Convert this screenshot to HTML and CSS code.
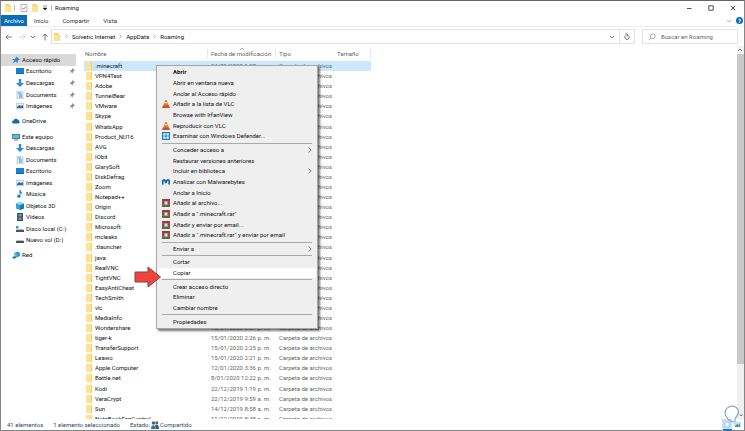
FILE: index.html
```
<!DOCTYPE html>
<html lang="es">
<head>
<meta charset="utf-8">
<title>Roaming</title>
<link rel="stylesheet" href="styles.css">
</head>
<body>
<svg class="defs" aria-hidden="true">
  <symbol id="folder" viewBox="0 0 8 9"><path d="M1 0h4l1 1h1v8H1z" fill="#f5cf68"/><path d="M1 2h5v7H1z" fill="#ffe294"/></symbol>
  <symbol id="down" viewBox="0 0 8 8"><path d="M2.8 0h2.4v4H8L4 8 0 4h2.8z" fill="#2b8be0"/></symbol>
  <symbol id="doc" viewBox="0 0 8 8"><path d="M1 0h5l1 1v7H1z" fill="#e4eef6" stroke="#9db4c6" stroke-width=".6"/><path d="M2 2h3M3 4h3M3 6h3" stroke="#2f8fd4"/></symbol>
  <symbol id="desk" viewBox="0 0 8 8"><path d="M0 1h8v6H0z" fill="#1583d3"/><path d="M0 6h8v1H0z" fill="#0f65ab"/></symbol>
  <symbol id="img" viewBox="0 0 8 8"><path d="M.3 1.3h7.4v5.4H.3z" fill="#e6f1fa" stroke="#98a9b8" stroke-width=".6"/><path d="M1 5l2-2 2 1 2-1v3H1z" fill="#336a9e"/></symbol>
  <symbol id="music" viewBox="0 0 8 8"><path d="M3.500 0h1c0 2 2.500 2 1.500 4.500C6 3.500 5 3 4.500 3v3.500A1.700 1.500 0 1 1 3.500 5z" fill="#1583d3"/></symbol>
  <symbol id="cube" viewBox="0 0 8 8"><path d="M4 0l4 1.500v5L4 8 0 6.500v-5z" fill="#2fa5de"/><path d="M4 3l4-1.500v5L4 8z" fill="#137bb9"/><path d="M4 0l4 1.500L4 3 0 1.500z" fill="#8fdcf7"/></symbol>
  <symbol id="video" viewBox="0 0 8 8"><path d="M1 0h6v8H1z" fill="#35414c"/><path d="M2.500 1h3v2.500h-3zM2.500 4.500h3V7h-3z" fill="#6f9cbd"/><path d="M1.700 0v8M6.300 0v8" stroke="#cbd4da" stroke-width=".5" stroke-dasharray=".6 .7"/></symbol>
  <symbol id="disk" viewBox="0 0 8 8"><path d="M0 5h8v2H0z" fill="#4d5358"/><path d="M1 4h6l1 1H0z" fill="#b7bdc2"/></symbol>
  <symbol id="pin" viewBox="0 0 6 6"><path d="M3.500 .3l2.200 2.200-1 .3-1 1-.1 1.400L.9 2.500l1.400-.1 1-1zM2 4L.3 5.700" fill="#7e8990" stroke="#7e8990" stroke-width=".3"/></symbol>
  <symbol id="vlc" viewBox="0 0 8 8"><path d="M3.300 0h1.400L7 6H1z" fill="#e8762c"/><path d="M2.700 2h2.600l.4 1.300H2.200z" fill="#f3e5dc"/><path d="M1 5.500h6L8 8H0z" fill="#d3501c"/></symbol>
  <symbol id="rar" viewBox="0 0 8 8"><path d="M0 0h8v2.700H0z" fill="#a5333e"/><path d="M0 2.700h8v2.600H0z" fill="#2c6b89"/><path d="M0 5.300h8V8H0z" fill="#3a7d43"/><path d="M0 0h2v8H0zM6 0h2v8H6z" fill="#b83b3b" opacity=".6"/><path d="M2.500 2.500h3v3h-3z" fill="#e5dfcf"/></symbol>
  <symbol id="def" viewBox="0 0 8 8"><path d="M0 0h8v8H0z" fill="#1680cf"/><path d="M1.300 1.300h5.400v5.400H1.300z" fill="#fff"/><path d="M4 1.300v5.400M1.300 4h5.400" stroke="#1680cf" stroke-width="1"/></symbol>
  <symbol id="mwb" viewBox="0 0 8 8"><path d="M1 6.500C.5 4 .7 1.800 2 1.800S4 5 4 5s.5-3.200 2-3.200S7.500 4 7 6.500" fill="none" stroke="#1463ad" stroke-width="1.700"/></symbol>
  <symbol id="chev" viewBox="0 0 6 6"><path d="M1 2l2 2 2-2" fill="none" stroke="currentColor" stroke-width=".9"/></symbol>
  <symbol id="right" viewBox="0 0 4 6"><path d="M.5 .5L3.200 3 .5 5.500" fill="none" stroke="currentColor" stroke-width=".6"/></symbol>
</svg>
<div class="window">
  <header class="title">
    <svg class="ic"><use href="#folder"/></svg><i class="bar"></i>
    <svg class="ic" viewBox="0 0 8 8"><path d="M1 .5h6v7H1z" fill="#fff" stroke="#999" stroke-width=".7"/><path d="M2.500 4l1 1.300L6 2.500" fill="none" stroke="#a04545" stroke-width=".8"/></svg>
    <svg class="ic"><use href="#folder"/></svg>
    <svg class="ic tiny" viewBox="0 0 6 6"><path d="M1 1h4M1 3h4L3 5z" stroke="#333" stroke-width=".5"/></svg><i class="bar"></i>
    <span class="name">Roaming</span>
    <div class="controls">
      <button aria-label="Minimizar"><svg viewBox="0 0 6 6"><path d="M1 3.500h4.500" stroke="#222" stroke-width=".8"/></svg></button>
      <button aria-label="Maximizar"><svg viewBox="0 0 6 6"><path d="M.8 .8h4.400v4.400H.8z" fill="none" stroke="#222" stroke-width=".8"/></svg></button>
      <button aria-label="Cerrar"><svg viewBox="0 0 6 6"><path d="M.8 .8l4.400 4.400M5.200 .8L.8 5.200" stroke="#222" stroke-width=".8"/></svg></button>
    </div>
  </header>
  <nav class="tabs">
    <button class="file">Archivo</button><button>Inicio</button><button>Compartir</button><button>Vista</button>
    <div class="help"><svg class="tiny"><use href="#chev"/></svg><button class="q" aria-label="Ayuda">?</button></div>
  </nav>
  <div class="address">
    <div class="arrows">
      <svg viewBox="0 0 8 8"><path d="M7 4H1M3.500 1.500L1 4l2.500 2.500" fill="none" stroke="#666" stroke-width=".8"/></svg>
      <svg viewBox="0 0 8 8"><path d="M1 4h6M4.500 1.500L7 4 4.500 6.500" fill="none" stroke="#ccc" stroke-width=".8"/></svg>
      <svg class="tiny"><use href="#chev"/></svg>
      <svg viewBox="0 0 8 8"><path d="M4 7.500V1M1.500 3.500L4 1l2.500 2.500" fill="none" stroke="#555" stroke-width=".8"/></svg>
    </div>
    <div class="path">
      <svg class="ic"><use href="#folder"/></svg>
      <svg class="sep"><use href="#right"/></svg><a href="#">Solvetic Internet</a>
      <svg class="sep"><use href="#right"/></svg><a href="#">AppData</a>
      <svg class="sep"><use href="#right"/></svg><a href="#">Roaming</a>
      <div class="end"><button aria-label="Ubicaciones"><svg class="tiny"><use href="#chev"/></svg></button><button class="reload" aria-label="Actualizar"><svg viewBox="0 0 8 8"><path d="M2.800 2.400A2.200 2.200 0 1 0 5.200 2.400M2.200 1h2.200v2.200" fill="none" stroke="#555" stroke-width=".8"/></svg></button></div>
    </div>
    <label class="search"><svg viewBox="0 0 8 8"><circle cx="4.700" cy="3.300" r="2.400" fill="none" stroke="#777" stroke-width=".6"/><path d="M3 5L.8 7.200" stroke="#777" stroke-width=".6"/></svg><input type="text" placeholder="Buscar en Roaming" aria-label="Buscar en Roaming"></label>
  </div>
  <main>
    <aside>
      <ul class="group quick">
        <li class="top on"><svg viewBox="0 0 8 8"><path d="M4.500 .5L8 3.500 6 4.500 5.500 7 3.500 5.500 .5 7.500 2.300 4.500 0 3h3z" fill="#2b8bd6"/></svg>Acceso rápido</li>
        <li><svg><use href="#desk"/></svg>Escritorio<svg class="pin"><use href="#pin"/></svg></li>
        <li><svg><use href="#down"/></svg>Descargas<svg class="pin"><use href="#pin"/></svg></li>
        <li><svg><use href="#doc"/></svg>Documents<svg class="pin"><use href="#pin"/></svg></li>
        <li><svg><use href="#img"/></svg>Imágenes<svg class="pin"><use href="#pin"/></svg></li>
      </ul>
      <ul class="group">
        <li class="top"><svg viewBox="0 0 8 8"><path d="M1.500 6.500a1.500 1.500 0 0 1 0-3 2.500 2.500 0 0 1 4.500-.5 1.800 1.800 0 0 1 .5 3.500z" fill="#0f6cbd"/></svg>OneDrive</li>
      </ul>
      <ul class="group pc">
        <li class="top"><svg viewBox="0 0 8 8"><path d="M0 1h8v5H0z" fill="#4a6272"/><path d="M.6 1.600h6.800v3.800H.6z" fill="#54bbed"/><path d="M2 7h4" stroke="#637580"/></svg>Este equipo</li>
        <li><svg><use href="#down"/></svg>Descargas</li>
        <li><svg><use href="#doc"/></svg>Documents</li>
        <li><svg><use href="#desk"/></svg>Escritorio</li>
        <li><svg><use href="#img"/></svg>Imágenes</li>
        <li><svg><use href="#music"/></svg>Música</li>
        <li><svg><use href="#cube"/></svg>Objetos 3D</li>
        <li><svg><use href="#video"/></svg>Vídeos</li>
        <li><svg viewBox="0 0 8 8"><path d="M0 1h2.500v2.500H0z" fill="#2b9be0"/><path d="M0 5h8v2H0z" fill="#4d5358"/><path d="M1 4h6l1 1H0z" fill="#b7bdc2"/></svg>Disco local (C:)</li>
        <li><svg><use href="#disk"/></svg>Nuevo vol (D:)</li>
      </ul>
      <ul class="group">
        <li class="top"><svg viewBox="0 0 8 8"><path d="M2 2l4-1.500L8 2v3L4.500 6.500 2 5z" fill="#2d9bd8"/><path d="M2 2l2.500 1v3.500L2 5z" fill="#74c5ec"/><path d="M0 6l3-1 1.500 1.500L2 8z" fill="#37799f"/></svg>Red</li>
      </ul>
    </aside>
    <section class="files">
      <table>
        <thead><tr><th class="n">Nombre</th><th class="d">Fecha de modificación<svg class="tiny sort"><use href="#chev"/></svg></th><th class="t">Tipo</th><th class="s">Tamaño</th></tr></thead>
        <tbody>
          <tr class="on"><td>.minecraft</td><td>24/01/2020 1:27</td><td>Carpeta de archivos</td><td></td></tr>
          <tr><td>VPN4Test</td><td></td><td>Carpeta de archivos</td><td></td></tr>
          <tr><td>Adobe</td><td></td><td>Carpeta de archivos</td><td></td></tr>
          <tr><td>TunnelBear</td><td></td><td>Carpeta de archivos</td><td></td></tr>
          <tr><td>VMware</td><td></td><td>Carpeta de archivos</td><td></td></tr>
          <tr><td>Skype</td><td></td><td>Carpeta de archivos</td><td></td></tr>
          <tr><td>WhatsApp</td><td></td><td>Carpeta de archivos</td><td></td></tr>
          <tr><td>Product_NU16</td><td></td><td>Carpeta de archivos</td><td></td></tr>
          <tr><td>AVG</td><td></td><td>Carpeta de archivos</td><td></td></tr>
          <tr><td>IObit</td><td></td><td>Carpeta de archivos</td><td></td></tr>
          <tr><td>GlarySoft</td><td></td><td>Carpeta de archivos</td><td></td></tr>
          <tr><td>DiskDefrag</td><td></td><td>Carpeta de archivos</td><td></td></tr>
          <tr><td>Zoom</td><td></td><td>Carpeta de archivos</td><td></td></tr>
          <tr><td>Notepad++</td><td></td><td>Carpeta de archivos</td><td></td></tr>
          <tr><td>Origin</td><td></td><td>Carpeta de archivos</td><td></td></tr>
          <tr><td>Discord</td><td></td><td>Carpeta de archivos</td><td></td></tr>
          <tr><td>Microsoft</td><td></td><td>Carpeta de archivos</td><td></td></tr>
          <tr><td>mcleaks</td><td></td><td>Carpeta de archivos</td><td></td></tr>
          <tr><td>.tlauncher</td><td></td><td>Carpeta de archivos</td><td></td></tr>
          <tr><td>java</td><td></td><td>Carpeta de archivos</td><td></td></tr>
          <tr><td>RealVNC</td><td></td><td>Carpeta de archivos</td><td></td></tr>
          <tr><td>TightVNC</td><td></td><td>Carpeta de archivos</td><td></td></tr>
          <tr><td>EasyAntiCheat</td><td></td><td>Carpeta de archivos</td><td></td></tr>
          <tr><td>TechSmith</td><td></td><td>Carpeta de archivos</td><td></td></tr>
          <tr><td>vlc</td><td></td><td>Carpeta de archivos</td><td></td></tr>
          <tr><td>MediaInfo</td><td></td><td>Carpeta de archivos</td><td></td></tr>
          <tr><td>Wondershare</td><td>15/01/2020 2:27 p. m.</td><td>Carpeta de archivos</td><td></td></tr>
          <tr><td>tiger-k</td><td>15/01/2020 2:26 p. m.</td><td>Carpeta de archivos</td><td></td></tr>
          <tr><td>TransferSupport</td><td>15/01/2020 2:25 p. m.</td><td>Carpeta de archivos</td><td></td></tr>
          <tr><td>Leawo</td><td>15/01/2020 2:21 p. m.</td><td>Carpeta de archivos</td><td></td></tr>
          <tr><td>Apple Computer</td><td>12/01/2020 3:36 p. m.</td><td>Carpeta de archivos</td><td></td></tr>
          <tr><td>Battle.net</td><td>8/01/2020 12:22 p. m.</td><td>Carpeta de archivos</td><td></td></tr>
          <tr><td>Kodi</td><td>22/12/2019 1:19 p. m.</td><td>Carpeta de archivos</td><td></td></tr>
          <tr><td>VeraCrypt</td><td>22/12/2019 9:59 a. m.</td><td>Carpeta de archivos</td><td></td></tr>
          <tr><td>Sun</td><td>14/12/2019 8:58 a. m.</td><td>Carpeta de archivos</td><td></td></tr>
          <tr><td>NoteBookFanControl</td><td>11/12/2019 8:38 p. m.</td><td>Carpeta de archivos</td><td></td></tr>
        </tbody>
      </table>
    </section>
    <div class="scroll"><svg class="tiny up"><use href="#chev"/></svg><div class="thumb"></div></div>
  </main>
  <footer>
    <span>41 elementos</span><span>1 elemento seleccionado</span>
    <span class="state">Estado: <svg viewBox="0 0 8 8"><circle cx="2.500" cy="2" r="1.700" fill="#3a6b7a"/><circle cx="5.800" cy="1.800" r="1.500" fill="#6c5a48"/><path d="M0 8c0-5 4.500-5 5 0z" fill="#267aa8"/><path d="M4 4c2-1.500 4 0 4 4H5.300z" fill="#345c70"/></svg> Compartido</span>
  </footer>
</div>

<div class="menu" role="menu">
  <button class="bold">Abrir</button>
  <button>Abrir en ventana nueva</button>
  <button>Anclar al Acceso rápido</button>
  <button><svg><use href="#vlc"/></svg>Añadir a la lista de VLC</button>
  <button>Browse with IrfanView</button>
  <button><svg><use href="#vlc"/></svg>Reproducir con VLC</button>
  <button><svg><use href="#def"/></svg>Examinar con Windows Defender...</button>
  <hr>
  <button>Conceder acceso a<svg class="more"><use href="#right"/></svg></button>
  <button>Restaurar versiones anteriores</button>
  <button>Incluir en biblioteca<svg class="more"><use href="#right"/></svg></button>
  <button><svg><use href="#mwb"/></svg>Analizar con Malwarebytes</button>
  <button>Anclar a Inicio</button>
  <button><svg><use href="#rar"/></svg>Añadir al archivo...</button>
  <button><svg><use href="#rar"/></svg>Añadir a ".minecraft.rar"</button>
  <button><svg><use href="#rar"/></svg>Añadir y enviar por email...</button>
  <button><svg><use href="#rar"/></svg>Añadir a ".minecraft.rar" y enviar por email</button>
  <hr>
  <button>Enviar a<svg class="more"><use href="#right"/></svg></button>
  <hr>
  <button>Cortar</button>
  <button class="hot">Copiar</button>
  <hr>
  <button>Crear acceso directo</button>
  <button>Eliminar</button>
  <button>Cambiar nombre</button>
  <hr>
  <button>Propiedades</button>
</div>
<svg class="pointer" viewBox="0 0 28 22"><path d="M1 6h13V1l12.500 10L14 21v-5H1z" fill="#f5423b" stroke="#6e4a4a" stroke-width="1"/></svg>
<svg class="mark" viewBox="0 0 22 26"><path d="M0 14h10v12H0z" fill="#c3e0f5"/><path d="M1 24h9v2H1z" fill="#2c78ad"/><path d="M3 17h4v5H3z" fill="#eef7fd" stroke="#8bb7d6" stroke-width=".6"/><path d="M12 17h7v5h-7z" fill="#c7dff0"/><path d="M13 21l2-2 2 1 1-2v4h-5z" fill="#5a8fb8"/><path d="M6 14c-4-4-4-10 1-12 6-2.500 11 2 9 7-1 3-4 4-3 8M6 14c2 1 3 3 6 3" fill="none" stroke="#7ea9cf" stroke-width="1.200"/><path d="M17.500 9.500l1.500 1.500 1.500-1.500" fill="none" stroke="#777" stroke-width=".9"/></svg>
</body>
</html>
```
FILE: styles.css
```
* { box-sizing: border-box; }
html, body { height: 100%; }
body {
  margin: 0;
  position: relative;
  overflow: hidden;
  background: #fff;
  color: #111;
  font: 6px/10px Roboto, "Open Sans", sans-serif;
}
button { margin: 0; padding: 0; border: 0; background: none; color: inherit; font: inherit; }
a { color: inherit; text-decoration: none; }
ul { margin: 0; padding: 0; list-style: none; }
svg { width: 8px; height: 8px; flex: none; }
.defs { position: absolute; width: 0; height: 0; }
.tiny { width: 6px; height: 6px; color: #666; }

.window {
  height: 100%;
  display: flex;
  flex-direction: column;
  border: 1px solid #858585;
  border-top-color: #666;
}
.title { height: 14px; flex: none; display: flex; align-items: center; padding-left: 3px; }
.title .ic { margin-right: 3px; }
.title .ic:first-child { margin-right: 2px; }
.title .bar { width: 1px; height: 6px; margin-right: 5px; background: #bbb; }
.title .tiny { margin: 0 3px 0 0; }
.title .tiny + .bar { margin-right: 3px; }
.controls { display: flex; gap: 16px; margin-left: auto; padding-right: 8px; }
.controls button, .help { display: flex; align-items: center; }
.controls svg { width: 6px; height: 6px; }

.tabs { height: 12px; flex: none; display: flex; align-items: center; gap: 14px; border-bottom: 1px solid #eee; color: #333; }
.tabs button { line-height: 11px; }
.tabs .file { width: 26px; margin-right: -7px; background: #0a6dbb; color: #fff; }
.tabs .help { gap: 4px; margin-left: auto; padding-right: 1px; }
.tabs .help svg { color: #aaa; }
.tabs .q { width: 7px; height: 7px; border-radius: 4px; background: #0e6cbd; color: #fff; font-weight: bold; line-height: 7px; }

.address { height: 19px; flex: none; display: flex; align-items: center; padding-right: 6px; }
.arrows { width: 50px; display: flex; align-items: center; justify-content: space-between; padding: 0 2px 0 4px; }
.path, .search { height: 15px; display: flex; align-items: center; border: 1px solid #e3e3e3; }
.path { flex: 1; gap: 4px; padding-left: 1px; }
.sep { width: 3px; height: 5px; color: #555; }
.end { height: 100%; display: flex; margin-left: auto; }
.end button { width: 15px; display: flex; align-items: center; justify-content: center; }
.end .reload { border-left: 1px solid #e3e3e3; }
.search { width: 96px; margin-left: 7px; padding-left: 5px; gap: 5px; }
.search input { width: 100%; min-width: 0; padding: 0; border: 0; outline: 0; font: inherit; }
.search input::placeholder { color: #666; opacity: 1; }

main { flex: 1; min-height: 0; display: flex; }
aside { width: 75px; padding-top: 8px; }
.group { display: grid; grid-auto-rows: 1fr; height: 12px; margin-bottom: 4px; }
.quick { height: 58px; margin-bottom: 3px; }
.pc { height: 115px; margin-bottom: 3px; }
.group li { display: flex; align-items: center; gap: 2px; padding-left: 15px; white-space: nowrap; }
.group .top { padding-left: 11px; }
.group .on { background: #d9d9d9; }
.group .pin { width: 6px; height: 6px; margin: 0 1px 0 auto; }

.files { flex: 1; min-width: 0; overflow: hidden; padding-left: 8px; }
table { width: 287px; height: 378px; border-collapse: collapse; table-layout: fixed; }
th, td { padding: 0 0 0 3px; font-weight: normal; text-align: left; white-space: nowrap; line-height: 10px; }
th { height: 15px; color: #666; background: linear-gradient(#e5e5e5, #e5e5e5) right center / 1px 9px no-repeat; }
th.n { width: 124px; padding-left: 1px; }
th.d { width: 68px; position: relative; }
th.t { width: 58px; background: none; }
.sort { position: absolute; left: 31px; top: 0; color: #aaa; transform: rotate(180deg); }
td { color: #666; }
td:first-child {
  padding-left: 11px;
  color: #111;
  background: linear-gradient(90deg, #ffe294 5px, #f5cf68 5px) 2px center / 6px 8px no-repeat;
}
.on td, .on td:first-child { background-color: #cce8ff; }
.scroll { width: 7px; display: flex; flex-direction: column; background: #f0f0f0; }
.up { transform: rotate(180deg); margin: 1px 0; }
.thumb { height: 310px; background: #c9c9c9; }

footer { height: 11px; flex: none; display: flex; align-items: center; gap: 10px; padding-left: 6px; color: #29486b; }
.state { display: flex; align-items: center; gap: 1px; }

.menu {
  position: absolute;
  left: 156px;
  top: 65px;
  width: 162px;
  height: 264px;
  display: flex;
  flex-direction: column;
  padding: 1px;
  border: 1px solid #a5a5a5;
  background: #efefef;
  box-shadow: 2px 2px 2px #0008;
}
.menu button { position: relative; flex: 1; display: flex; align-items: center; padding-left: 15px; text-align: left; line-height: 10px; }
.menu button svg { position: absolute; left: 4px; }
.menu button .more { left: auto; right: 4px; width: 4px; height: 6px; color: #333; }
.menu .bold { font-weight: bold; }
.menu .hot { background: #fff; }
.menu hr { width: 150px; height: 1px; flex: none; margin: 1px auto; border: 0; background: #aaa; }
.pointer { position: absolute; left: 134px; top: 266px; width: 28px; height: 22px; }
.mark { position: absolute; right: 1px; bottom: 0; width: 22px; height: 26px; }
```
